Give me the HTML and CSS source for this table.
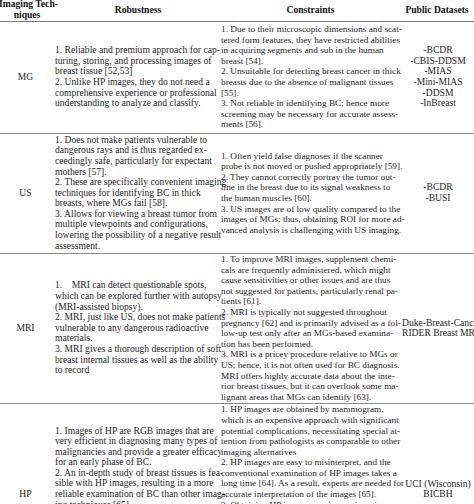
FILE: index.html
```html
<!DOCTYPE html>
<html>
<head>
<meta charset="utf-8">
<link rel="stylesheet" href="styles.css">
</head>
<body>
<table class="tbl">
  <colgroup>
    <col class="c1"><col class="c2"><col class="c3"><col class="c4">
  </colgroup>
  <thead>
    <tr class="head">
      <th class="tech">Imaging Tech-<br>niques</th>
      <th>Robustness</th>
      <th>Constraints</th>
      <th>Public Datasets</th>
    </tr>
  </thead>
  <tbody>
    <tr class="r-mg">
      <td class="name">MG</td>
      <td class="txt">1. Reliable and premium approach for cap-<br>turing, storing, and processing images of<br>breast tissue [52,53]<br>2. Unlike HP images, they do not need a<br>comprehensive experience or professional<br>understanding to analyze and classify.</td>
      <td class="txt con">1. Due to their microscopic dimensions and scat-<br>tered form features, they have restricted abilities<br>in acquiring segments and sub in the human<br>breast [54].<br>2. Unsuitable for detecting breast cancer in thick<br>breasts due to the absence of malignant tissues<br>[55].<br>3. Not reliable in identifying BC; hence more<br>screening may be necessary for accurate assess-<br>ments [56].</td>
      <td class="ds">-BCDR<br>-CBIS-DDSM<br>-MIAS<br>-Mini-MIAS<br>-DDSM<br>-InBreast</td>
    </tr>
    <tr class="r-us">
      <td class="name">US</td>
      <td class="txt">1. Does not make patients vulnerable to<br>dangerous rays and is thus regarded ex-<br>ceedingly safe, particularly for expectant<br>mothers [57].<br>2. These are specifically convenient imaging<br>techniques for identifying BC in thick<br>breasts, where MGs fail [58].<br>3. Allows for viewing a breast tumor from<br>multiple viewpoints and configurations,<br>lowering the possibility of a negative result<br>assessment.</td>
      <td class="txt con">1. Often yield false diagnoses if the scanner<br>probe is not moved or pushed appropriately [59].<br>2. They cannot correctly portray the tumor out-<br>line in the breast due to its signal weakness to<br>the human muscles [60].<br>3. US images are of low quality compared to the<br>images of MGs; thus, obtaining ROI for more ad-<br>vanced analysis is challenging with US imaging.</td>
      <td class="ds">-BCDR<br>-BUSI</td>
    </tr>
    <tr class="r-mri">
      <td class="name">MRI</td>
      <td class="txt">1.&nbsp;&nbsp;&nbsp; MRI can detect questionable spots,<br>which can be explored further with autopsy<br>(MRI-assisted biopsy).<br>2. MRI, just like US, does not make patients<br>vulnerable to any dangerous radioactive<br>materials.<br>3. MRI gives a thorough description of soft<br>breast internal tissues as well as the ability<br>to record</td>
      <td class="txt con">1. To improve MRI images, supplement chemi-<br>cals are frequently administered, which might<br>cause sensitivities or other issues and are thus<br>not suggested for patients, particularly renal pa-<br>tients [61].<br>2. MRI is typically not suggested throughout<br>pregnancy [62] and is primarily advised as a fol-<br>low-up test only after an MGs-based examina-<br>tion has been performed.<br>3. MRI is a pricey procedure relative to MGs or<br>US; hence, it is not often used for BC diagnosis.<br>MRI offers highly accurate data about the inte-<br>rior breast tissues, but it can overlook some ma-<br>lignant areas that MGs can identify [63].</td>
      <td class="ds">Duke-Breast-Cancer<br>RIDER Breast MRI</td>
    </tr>
    <tr class="r-hp">
      <td class="name">HP</td>
      <td class="txt">1. Images of HP are RGB images that are<br>very efficient in diagnosing many types of<br>malignancies and provide a greater efficacy<br>for an early phase of BC.<br>2. An in-depth study of breast tissues is fea-<br>sible with HP images, resulting in a more<br>reliable examination of BC than other imag-<br>ing techniques [65].<br>3. HP images preserve the structure of the<br>tissue, allowing detailed observation of<br>cellular features [66].<br>4. They remain the gold standard for<br>the final diagnosis of BC.</td>
      <td class="txt con">1. HP images are obtained by mammogram,<br>which is an expensive approach with significant<br>potential complications, necessitating special at-<br>tention from pathologists as comparable to other<br>imaging alternatives<br>2. HP images are easy to misinterpret, and the<br>conventional examination of HP images takes a<br>long time [64]. As a result, experts are needed for<br>accurate interpretation of the images [65].<br>3. Obtaining HP images requires an invasive<br>biopsy procedure, which may cause discomfort<br>and other complications for patients.<br>4. The staining process can vary between<br>laboratories, which produces color differences<br>among images and makes automated analysis<br>more difficult [66].<br>5. Large image sizes demand high storage.</td>
      <td class="ds ds-hp">UCI (Wisconsin)<br>BICBH</td>
    </tr>
  </tbody>
</table>
</body>
</html>
```

FILE: styles.css
```css
html, body {
  margin: 0;
  padding: 0;
  background: #ffffff;
  overflow: hidden;
  width: 474px;
  height: 504px;
}

.tbl {
  border-collapse: collapse;
  table-layout: fixed;
  width: 478px;
  margin-left: -4px;
  margin-top: -2px;
  font-family: "Liberation Serif", "Times New Roman", serif;
  font-size: 9.6px;
  line-height: 10.6px;
  color: #1e1e1e;
}

.c1 { width: 59px; }
.c2 { width: 166px; }
.c3 { width: 179px; }
.c4 { width: 74px; }

.head {
  height: 23px;
}

.head th {
  font-weight: bold;
  color: #111111;
  text-align: center;
  vertical-align: middle;
  padding: 0;
  line-height: 11px;
  white-space: nowrap;
  border-bottom: 1px solid #7a7a7a;
}

.head .tech {
  padding-left: 3px;
}

.r-mg { height: 112px; }
.r-us { height: 120px; }
.r-mri { height: 149px; }

td {
  vertical-align: middle;
  padding: 0.5px 0;
  white-space: nowrap;
  border-bottom: 1px solid #8a8a8a;
}

.name {
  text-align: center;
}

.txt {
  text-align: left;
}

.con {
  font-size: 9.25px;
}

.ds {
  text-align: center;
  padding-left: 2px;
}

.ds-hp {
  padding-bottom: 11px;
}
```
